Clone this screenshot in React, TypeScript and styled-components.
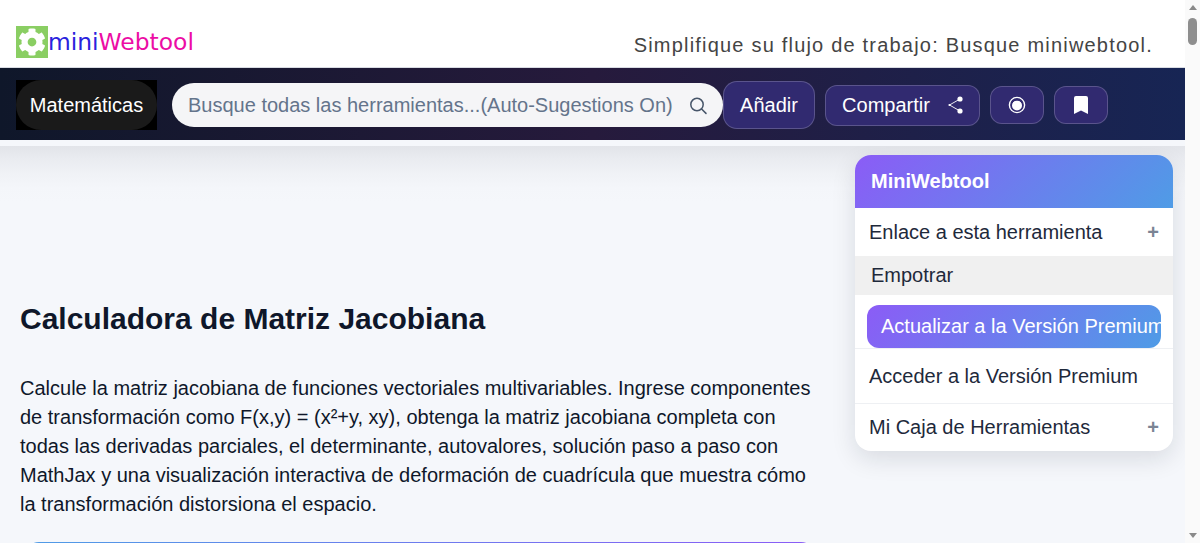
import React from 'react';
import styled, { createGlobalStyle } from 'styled-components';
import { FaCog } from 'react-icons/fa';

const Global = createGlobalStyle`
  html, body { height: 100%; overflow: hidden; }
  body { margin: 0; background: #f5f7fb; font-family: "Liberation Sans", Arial, sans-serif; color: #0f172a; }
  * { box-sizing: border-box; }
`;
const Shell = styled.div` display: flex; height: 543px; overflow: hidden; `;
const Content = styled.div` flex: 1; min-width: 0; height: 543px; overflow: hidden; background: #f5f7fb; `;
const Scrollbar = styled.div`
  width: 15px; flex: none; background: #fafafa; display: flex; flex-direction: column; align-items: center; padding-top: 5px; height: 543px;
`;
const ArrowUp = styled.div` width: 0; height: 0; border-left: 4.5px solid transparent; border-right: 4.5px solid transparent; border-bottom: 5px solid #8a8a8a; `;
const Thumb = styled.div` width: 9px; height: 27px; margin-top: 8px; border-radius: 5px; background: #8e8e8e; `;
const ArrowDown = styled.div` width: 0; height: 0; margin-top: auto; margin-bottom: 5px; border-left: 4.5px solid transparent; border-right: 4.5px solid transparent; border-top: 5px solid #8a8a8a; `;
const Top = styled.header`
  height: 67px; background: #fff; display: flex; justify-content: space-between; align-items: flex-end;
  padding: 0 32px 9px 16px;
`;
const Logo = styled.a`
  display: flex; align-items: center; font-family: "DejaVu Sans", sans-serif; font-size: 23.4px; line-height: 32px;
`;
const LogoBox = styled.span`
  width: 32px; height: 32px; background: #8ace63; color: #fff; display: flex; align-items: center; justify-content: center; font-size: 28px;
`;
const Mini = styled.span` color: #2a22dd; `;
const Web = styled.span` color: #ec0ca5; `;
const Tagline = styled.div` font-size: 20px; letter-spacing: 1.2px; color: #444; line-height: 24px; margin-bottom: 1px; `;
const Nav = styled.nav`
  height: 73px; background: linear-gradient(90deg, #0f172a 0%, #261a3c 50%, #172554 100%);
  border-top: 1px solid #d9dce3; display: flex; align-items: center; padding: 2px 16px 0;
`;
const CatBox = styled.div` background: #000; height: 50px; width: 141px; `;
const Cat = styled.div`
  height: 100%; border-radius: 25px; background: #1a1a1a; color: #fff; font-size: 20px; display: flex; align-items: center; justify-content: center;
`;
const Search = styled.div`
  margin-left: 15px; width: 551px; height: 44px; border-radius: 22px; background: #f5f5f7; display: flex; align-items: center; padding: 0 15px 0 16px;
  justify-content: space-between; font-size: 20px; color: #64748b;
`;
const Btn = styled.button<{ $w: number; $h: number; $ml: number; $r?: number }>`
  width: ${p => p.$w}px; height: ${p => p.$h}px; margin-left: ${p => p.$ml}px; border-radius: ${p => p.$r ?? 12}px;
  background: #312a70; border: 1px solid rgba(255,255,255,.2); color: #fff; font: 20px "Liberation Sans", Arial, sans-serif;
  display: flex; align-items: center; justify-content: center; padding: 0;
`;
const ShareSvg = styled.svg` margin-left: 17px; `;
const Page = styled.main`
  margin-top: 6px; height: 403px;
  background: linear-gradient(#e2e4e9 0, #e9ebf0 12px, #f0f2f6 28px, #f4f6fa 42px, #f5f7fb 56px);
  display: flex; align-items: flex-start; padding: 9px 12px 0 20px; gap: 40px; overflow: hidden;
`;
const Left = styled.div` width: 795px; flex: none; `;
const Title = styled.h1` margin: 146px 0 0; font-size: 30px; line-height: 36px; font-weight: 700; `;
const Para = styled.p` margin: 37px 0 0; font-size: 20px; line-height: 29px; `;
const ToolCard = styled.div`
  margin: 23px 0 0 5px; width: 790px; height: 500px; border-radius: 14px; border-top: 2px solid transparent;
  background: linear-gradient(#fff,#fff) padding-box, linear-gradient(90deg,#4f9ce6,#8b5cf6) border-box;
`;
const Side = styled.aside`
  width: 318px; flex: none; background: #fff; border-radius: 16px; overflow: hidden; box-shadow: 0 8px 24px rgba(15,23,42,.12);
  height: 296px;
`;
const SideHead = styled.div`
  height: 53px; background: linear-gradient(135deg, #8b5cf6, #4f9ce6); color: #fff; font-weight: 700; font-size: 20px; display: flex; align-items: center; padding-left: 16px;
`;
const Row = styled.div<{ $h: number; $line?: boolean }>`
  height: ${p => p.$h}px; display: flex; align-items: center; justify-content: space-between; padding: 0 14px; font-size: 20px; color: #1e293b;
  ${p => p.$line ? 'border-bottom: 1px solid #eef0f3;' : ''}
`;
const Plus = styled.span` color: #7b8494; font-weight: 700; font-size: 20px; `;
const Embed = styled.div` height: 39px; background: #f0f0f0; display: flex; align-items: center; padding-left: 16px; font-size: 20px; color: #1e293b; `;
const PremWrap = styled.div` height: 54px; padding: 10px 12px 0; border-bottom: 1px solid #eef0f3; `;
const Prem = styled.div`
  height: 43px; border-radius: 12px; background: linear-gradient(135deg,#8b5cf6,#4f9ce6); color: #fff; font-size: 20px; display: flex; align-items: center; padding-left: 14px; overflow: hidden; white-space: nowrap;
`;

export default function App() {
  return (
    <Shell>
      <Global />
      <Content>
        <Top>
          <Logo><LogoBox><FaCog /></LogoBox><Mini>mini</Mini><Web>Webtool</Web></Logo>
          <Tagline>Simplifique su flujo de trabajo: Busque miniwebtool.</Tagline>
        </Top>
        <Nav>
          <CatBox><Cat>Matemáticas</Cat></CatBox>
          <Search>
            Busque todas las herramientas...(Auto-Sugestions On)
            <svg width="19" height="19" viewBox="0 0 19 19" fill="none" stroke="#475569" strokeWidth="1.5" strokeLinecap="round"><circle cx="8" cy="8.5" r="6.2" /><path d="M12.6 13l4.4 4.4" /></svg>
          </Search>
          <Btn $w={92} $h={48} $ml={0} $r={14}>Añadir</Btn>
          <Btn $w={155} $h={41} $ml={10}>
            Compartir
            <ShareSvg width="16" height="20" viewBox="0 0 16 20" fill="#fff">
              <path d="M13 4L2.5 10L13 16" fill="none" stroke="#fff" strokeWidth="0.9" />
              <circle cx="13" cy="4" r="2.6" /><circle cx="13" cy="16" r="2.6" /><circle cx="2.5" cy="10" r="1.1" />
            </ShareSvg>
          </Btn>
          <Btn $w={54} $h={38} $ml={10}>
            <svg width="18" height="18" viewBox="0 0 18 18" fill="none"><circle cx="9" cy="9" r="7.6" stroke="#fff" strokeWidth="1.4" /><circle cx="9" cy="9.4" r="5" fill="#fff" /><path d="M3.8 7.4A5.6 5.6 0 0 1 14.2 7.4" stroke="#312a70" strokeWidth="1" /></svg>
          </Btn>
          <Btn $w={54} $h={38} $ml={10}>
            <svg width="14" height="18" viewBox="0 0 14 18"><path d="M0 2a2 2 0 0 1 2-2h10a2 2 0 0 1 2 2v16l-7-3.6L0 18z" fill="#fff" /></svg>
          </Btn>
        </Nav>
        <Page>
          <Left>
            <Title>Calculadora de Matriz Jacobiana</Title>
            <Para>Calcule la matriz jacobiana de funciones vectoriales multivariables. Ingrese componentes de transformación como F(x,y) = (x²+y, xy), obtenga la matriz jacobiana completa con todas las derivadas parciales, el determinante, autovalores, solución paso a paso con MathJax y una visualización interactiva de deformación de cuadrícula que muestra cómo la transformación distorsiona el espacio.</Para>
            <ToolCard />
          </Left>
          <Side>
            <SideHead>MiniWebtool</SideHead>
            <Row $h={48}>Enlace a esta herramienta<Plus>+</Plus></Row>
            <Embed>Empotrar</Embed>
            <PremWrap><Prem>Actualizar a la Versión Premium</Prem></PremWrap>
            <Row $h={55} $line>Acceder a la Versión Premium</Row>
            <Row $h={47}>Mi Caja de Herramientas<Plus>+</Plus></Row>
          </Side>
        </Page>
      </Content>
      <Scrollbar><ArrowUp /><Thumb /><ArrowDown /></Scrollbar>
    </Shell>
  );
}
